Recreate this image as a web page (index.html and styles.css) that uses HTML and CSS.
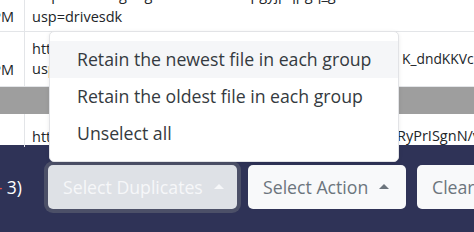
FILE: index.html
```html
<!DOCTYPE html>
<html lang="en">

<head>
    <meta charset="UTF-8">
    <meta name="viewport" content="width=device-width, initial-scale=1.0">
    <title>Duplicates</title>
    <link rel="stylesheet" href="styles.css">
</head>

<body>
    <div class="rows">
        <div class="row row-first">
            <div class="cell date"><span>3:12 PM</span></div>
            <div class="cell link">
                <div class="lines lines-top">
                    https://drive.google.com/file/d/1pgyjpqpgq_g/view?<br>usp=drivesdk
                </div>
            </div>
            <div class="cell extra"></div>
        </div>
        <div class="row row-second">
            <div class="cell date"><span>1:07 PM</span></div>
            <div class="cell link">
                <div class="lines">
                    https://drive.google.com/file/d/1zK/view?<br>usp=drivesdk
                </div>
            </div>
            <div class="cell extra"><span class="tail">K_dndKKVc</span><span class="mark"></span></div>
        </div>
        <div class="row row-group"></div>
        <div class="row row-third">
            <div class="cell date"></div>
            <div class="cell link">
                <div class="lines">https://drive.google.com/file/d/1Ry/view</div>
            </div>
            <div class="cell extra"><span class="tail">RyPrISgnN/view</span></div>
        </div>
    </div>

    <div class="footer">
        <div class="range"><span class="dash">–</span>&nbsp;3)</div>
        <div class="dropup">
            <button class="btn btn-dup focus">Select Duplicates<i class="caret"></i></button>
            <ul class="menu">
                <li class="hover">Retain the newest file in each group</li>
                <li>Retain the oldest file in each group</li>
                <li>Unselect all</li>
            </ul>
        </div>
        <button class="btn btn-light btn-action">Select Action<i class="caret"></i></button>
        <button class="btn btn-light">Clear</button>
    </div>
</body>

</html>
```

FILE: styles.css
```css
* {
    margin: 0;
    padding: 0;
    box-sizing: border-box;
    list-style: none;
}

body {
    width: 474px;
    height: 232px;
    overflow: hidden;
    background: #fff;
    font-family: "Open Sans", "Noto Sans", sans-serif;
    color: #212529;
}

/* table behind the menu */
.rows {
    height: 145px;
    display: flex;
    flex-direction: column;
}

.row {
    display: flex;
    flex-shrink: 0;
    border-bottom: 1px solid #e3e5e8;
    font-size: 14.5px;
    line-height: 20px;
}

.row-first {
    height: 32px;
}

.row-second {
    height: 55px;
}

.row-group {
    height: 27px;
    background: #9e9e9e;
    border-bottom: 0;
}

.row-third {
    flex: 1;
    border-bottom: 0;
}

.cell {
    overflow: hidden;
    white-space: nowrap;
    flex-shrink: 0;
}

.date {
    width: 25px;
    border-right: 1px solid #e3e5e8;
    display: flex;
    justify-content: flex-end;
    align-items: flex-end;
    padding-right: 10px;
    padding-bottom: 6px;
}

.row-first .date {
    padding-bottom: 4px;
}

.link {
    width: 368px;
    padding-left: 7px;
    display: flex;
    align-items: center;
}

.row-first .link {
    align-items: flex-start;
}

.lines-top {
    margin-top: -16px;
    line-height: 22px;
}

.row-third .link {
    align-items: flex-start;
    padding-top: 13px;
}

.extra {
    flex: 1;
    display: flex;
    align-items: center;
}

.row-second .extra {
    padding-left: 9px;
    font-size: 13.8px;
}

.row-third .extra {
    align-items: flex-start;
    padding-top: 12px;
    padding-left: 4px;
}

.mark {
    display: inline-block;
    flex-shrink: 0;
    width: 6px;
    height: 10px;
    margin-left: 1px;
    background: #6aa8c4;
}

/* footer bar */
.footer {
    height: 87px;
    background: #2f3357;
    display: flex;
    align-items: flex-start;
    padding-top: 20px;
    gap: 11px;
}

.footer > * {
    flex-shrink: 0;
}

.range {
    width: 22px;
    display: flex;
    justify-content: flex-end;
    overflow: hidden;
    white-space: nowrap;
    color: #fff;
    font-size: 17.5px;
    line-height: 44px;
    margin-right: 15px;
}

.dash {
    color: #e2583e;
}

.dropup {
    position: relative;
}

.btn {
    height: 44px;
    padding: 0 14px;
    border: 1px solid transparent;
    border-radius: 5px;
    font-family: inherit;
    font-size: 17.7px;
    white-space: nowrap;
    display: flex;
    align-items: center;
}

.btn-dup {
    width: 189px;
    background: #dee1e6;
    color: #f6f7f9;
}

.btn-dup.focus {
    box-shadow: 0 0 0 4px #4c5068;
}

.btn-light {
    background: #f8f9fa;
    color: #6c757d;
}

.btn-action {
    width: 158px;
}

.caret {
    margin-left: 11px;
    border-bottom: 5px solid currentColor;
    border-left: 5px solid transparent;
    border-right: 5px solid transparent;
    margin-top: -2px;
}

/* dropdown menu, opened upward */
.menu {
    position: absolute;
    left: 1px;
    bottom: 47px;
    width: 350px;
    padding: 9px 0;
    background: #fff;
    border: 1px solid #e2e3e6;
    border-radius: 5px;
    box-shadow: 0 1px 4px rgba(0, 0, 0, 0.08);
    font-size: 17.7px;
    color: #343a40;
}

.menu li {
    height: 37px;
    line-height: 37px;
    padding-left: 27px;
    white-space: nowrap;
}

.menu li.hover {
    background: #f5f6f8;
}
```
